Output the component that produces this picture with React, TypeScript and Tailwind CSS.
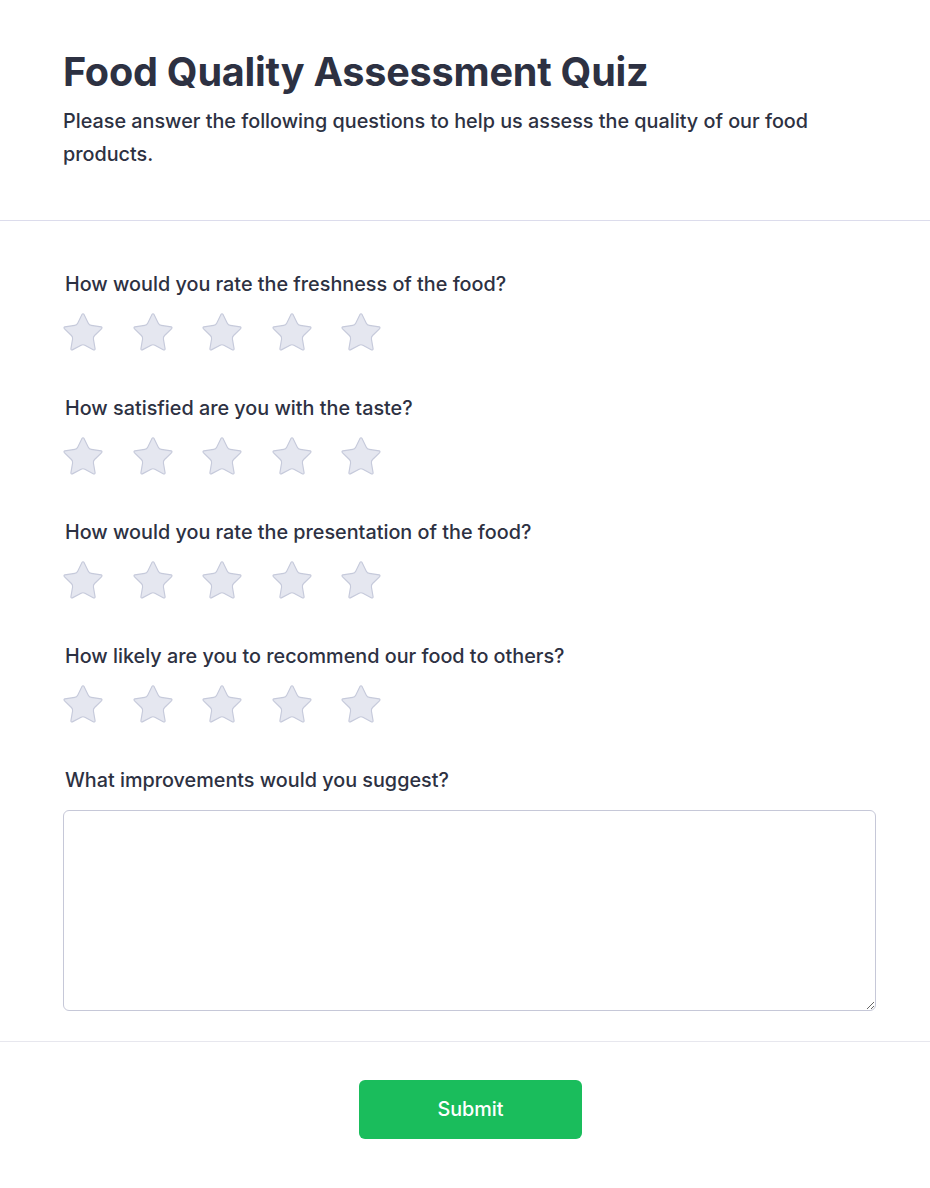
import { useState } from "react";

const questions = [
  "How would you rate the freshness of the food?",
  "How satisfied are you with the taste?",
  "How would you rate the presentation of the food?",
  "How likely are you to recommend our food to others?",
];

const StarIcon = ({ active }: { active: boolean }) => (
  <svg
    width="40"
    height="38"
    viewBox="1.5 1.6 21 20"
    fill={active ? "#facc15" : "#e5e7f0"}
    stroke={active ? "#eab308" : "#c6cadb"}
    strokeWidth="0.6"
    strokeLinejoin="round"
  >
    <path d="M11.525 2.295a.53.53 0 0 1 .95 0l2.31 4.679a2.123 2.123 0 0 0 1.595 1.16l5.166.756a.53.53 0 0 1 .294.904l-3.736 3.638a2.123 2.123 0 0 0-.611 1.878l.882 5.14a.53.53 0 0 1-.771.56l-4.618-2.428a2.122 2.122 0 0 0-1.973 0L6.396 21.01a.53.53 0 0 1-.77-.56l.881-5.139a2.122 2.122 0 0 0-.611-1.879L2.16 9.795a.53.53 0 0 1 .294-.906l5.165-.755a2.122 2.122 0 0 0 1.597-1.16z" />
  </svg>
);

const App = () => {
  const [ratings, setRatings] = useState<number[]>([0, 0, 0, 0]);
  const [note, setNote] = useState("");

  return (
    <div className="min-h-[1188px] bg-white text-[#2d3142] font-['Inter',sans-serif]">
      {/* header */}
      <div className="pl-[63px] pr-[54px] pt-[48px] pb-[49px] border-b border-[#dcdcec]">
        <h1 className="text-[39.6px] leading-[48px] font-bold tracking-[-0.22px]">
          Food Quality Assessment Quiz
        </h1>
        <p className="text-[19.8px] font-medium leading-[33px] mt-[9px]">
          Please answer the following questions to help us assess the quality
          of our food products.
        </p>
      </div>

      {/* questions */}
      <div className="pl-[63px] pr-[54px] pt-[49px] pb-[30px] border-b border-[#e7e7ee]">
        {questions.map((q, qi) => (
          <div key={q} className="mb-[43px]">
            <p className="text-[19.8px] font-medium leading-7 pl-[2px]">{q}</p>
            <div className="flex gap-[29.5px] mt-[15px]">
              {[1, 2, 3, 4, 5].map((n) => (
                <button
                  key={n}
                  type="button"
                  onClick={() =>
                    setRatings((r) => r.map((v, i) => (i === qi ? n : v)))
                  }
                >
                  <StarIcon active={ratings[qi] >= n} />
                </button>
              ))}
            </div>
          </div>
        ))}

        <p className="text-[19.8px] font-medium leading-7 pl-[2px]">
          What improvements would you suggest?
        </p>
        <textarea
          value={note}
          onChange={(e) => setNote(e.target.value)}
          className="mt-[16px] block w-full h-[201px] rounded-md border border-[#c6c8d8] p-3 text-base outline-none"
        />
      </div>

      {/* footer */}
      <div className="flex justify-center pl-[65px] pr-[54px] pt-[38px]">
        <button
          type="button"
          className="w-[223px] h-[59px] rounded-md bg-[#1abd5c] text-white text-[19.8px] font-medium"
        >
          Submit
        </button>
      </div>
    </div>
  );
};

export default App;
